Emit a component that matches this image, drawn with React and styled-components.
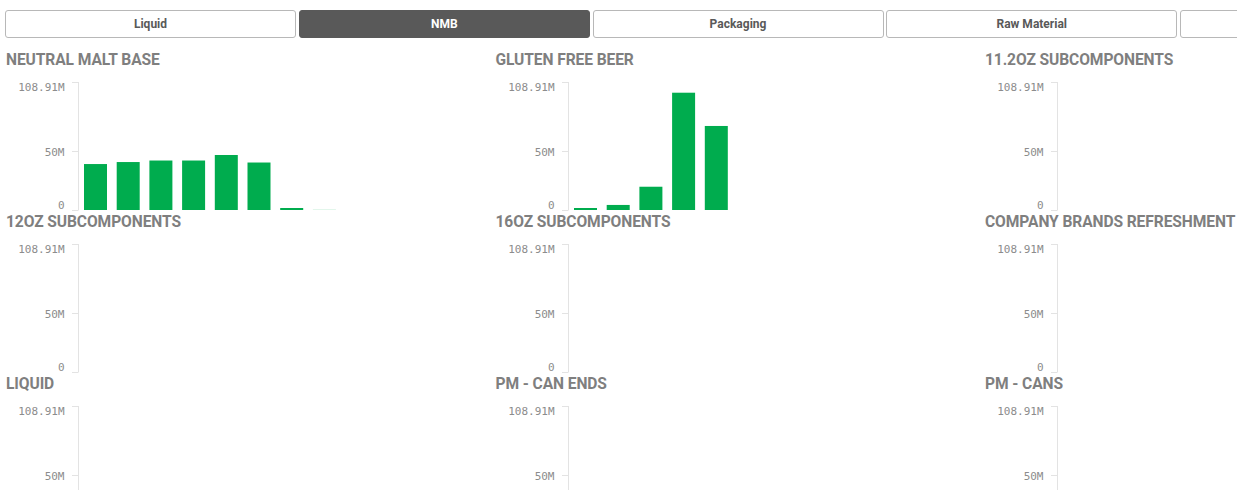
import React from 'react';
import styled, { createGlobalStyle } from 'styled-components';

const GlobalStyle = createGlobalStyle`
  html, body {
    margin: 0;
    padding: 0;
    background: #fff;
    overflow: hidden;
  }
  body {
    font-family: Roboto, "Liberation Sans", sans-serif;
  }
`;

const Page = styled.div`
  width: 1237px;
  height: 490px;
  overflow: hidden;
  background: #fff;
`;

const TabBar = styled.div`
  display: flex;
  gap: 2.75px;
  padding: 10px 0 0 5px;
  height: 38px;
  box-sizing: border-box;
`;

const Tab = styled.button`
  flex: 0 0 291px;
  height: 28px;
  box-sizing: border-box;
  border: 1px solid ${(p) => (p.$active ? '#595959' : '#b8b8b8')};
  border-radius: 3px;
  background: ${(p) => (p.$active ? '#595959' : '#fff')};
  color: ${(p) => (p.$active ? '#fff' : '#595959')};
  font-family: Roboto, "Liberation Sans", sans-serif;
  font-weight: 700;
  font-size: 12px;
  padding: 0;
  cursor: pointer;
`;

const Grid = styled.div`
  display: grid;
  grid-template-columns: repeat(3, 489.5px);
  grid-auto-rows: 162px;
  padding: 10px 0 0 5px;
`;

const Cell = styled.div`
  display: flex;
  flex-direction: column;
  min-width: 0;
`;

const Title = styled.h3`
  margin: 0;
  height: 34px;
  padding: 2px 0 0 1px;
  box-sizing: border-box;
  font-size: 15.6px;
  line-height: 20px;
  font-weight: 700;
  color: #7f7f7f;
  white-space: nowrap;
  letter-spacing: -0.1px;
`;

const Plot = styled.svg`
  display: block;
  overflow: visible;
  font-family: "DejaVu Sans Mono", monospace;
  font-size: 11px;
`;

const MAX = 108.91;
const H = 128;
const AXIS_X = 73.5;

const yFor = (v) => H - (v / MAX) * H;

const ticks = [
  { v: MAX, label: '108.91M', ty: 9 },
  { v: 50, label: '50M', ty: 74 },
  { v: 0, label: '0', ty: 126.5 },
];

const Chart = ({ data }) => (
  <Plot width="480" height={H}>
    <line x1={AXIS_X} y1="0" x2={AXIS_X} y2={H} stroke="#e3e3e3" />
    {ticks.map((t) => (
      <g key={t.label}>
        <line x1="67" y1={Math.round(yFor(t.v)) + 0.5} x2={AXIS_X} y2={Math.round(yFor(t.v)) + 0.5} stroke="#e3e3e3" />
        <text x="59.5" y={t.ty} textAnchor="end" fill="#8c8c8c">{t.label}</text>
      </g>
    ))}
    {data.map((v, i) => {
      const h = Math.max((v / MAX) * H, 1);
      return (
        <rect
          key={i}
          x={79 + i * 32.7}
          y={H - h}
          width="23"
          height={h}
          fill={v < 1 ? '#e2f6eb' : '#00ac4e'}
        />
      );
    })}
  </Plot>
);

const tabs = ['Liquid', 'NMB', 'Packaging', 'Raw Material', ''];

const charts = [
  { title: 'NEUTRAL MALT BASE', data: [39.1, 40.8, 42.1, 42.1, 46.8, 40.4, 1.7, 0.4] },
  { title: 'GLUTEN FREE BEER', data: [1.7, 4.3, 19.8, 99.8, 71.5] },
  { title: '11.2OZ SUBCOMPONENTS', data: [] },
  { title: '12OZ SUBCOMPONENTS', data: [] },
  { title: '16OZ SUBCOMPONENTS', data: [] },
  { title: 'COMPANY BRANDS REFRESHMENT', data: [] },
  { title: 'LIQUID', data: [] },
  { title: 'PM - CAN ENDS', data: [] },
  { title: 'PM - CANS', data: [] },
];

const App = () => {
  return (
    <>
      <GlobalStyle />
      <Page>
        <TabBar>
          {tabs.map((t, i) => (
            <Tab key={i} type="button" $active={t === 'NMB'}>
              {t}
            </Tab>
          ))}
        </TabBar>
        <Grid>
          {charts.map((c) => (
            <Cell key={c.title}>
              <Title>{c.title}</Title>
              <Chart data={c.data} />
            </Cell>
          ))}
        </Grid>
      </Page>
    </>
  );
};

export default App;
